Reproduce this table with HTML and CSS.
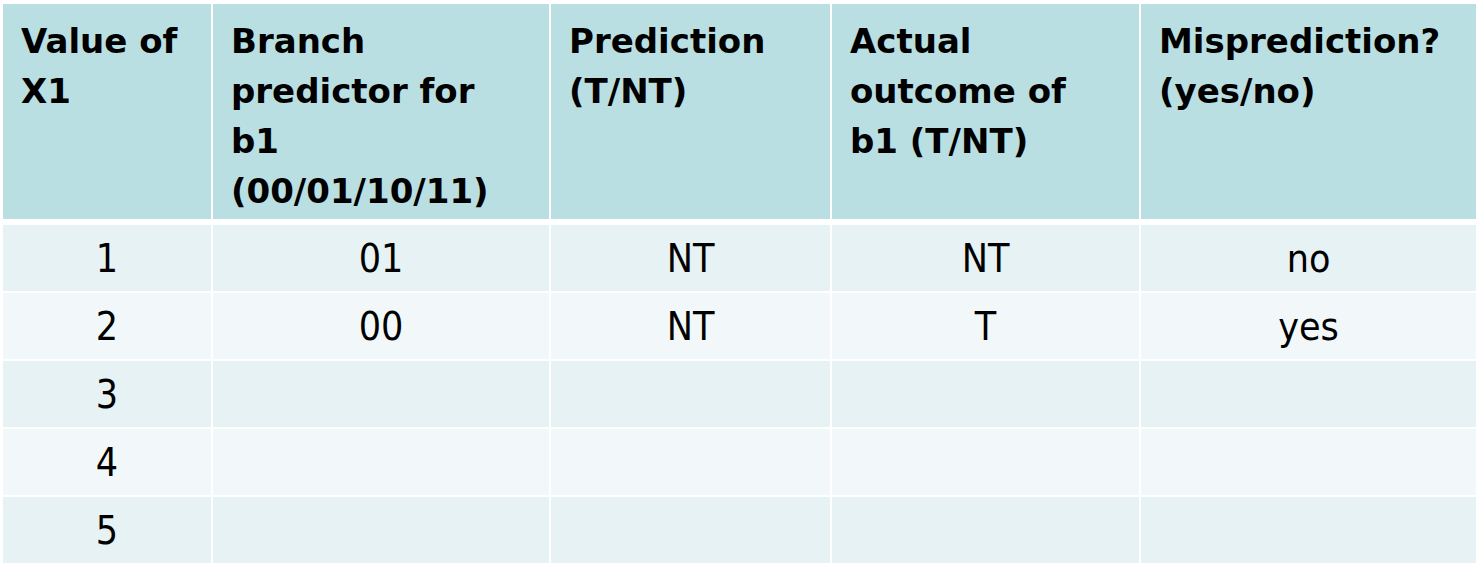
FILE: index.html
```html
<!DOCTYPE html>
<html>
<head>
<meta charset="utf-8">
<link rel="stylesheet" href="styles.css">
</head>
<body>
<div class="grid">
  <div class="cell head">Value of X1</div>
  <div class="cell head">Branch predictor for b1 (00/01/10/11)</div>
  <div class="cell head">Prediction (T/NT)</div>
  <div class="cell head">Actual outcome of b1 (T/NT)</div>
  <div class="cell head">Misprediction? (yes/no)</div>

  <div class="cell odd">1</div>
  <div class="cell odd">01</div>
  <div class="cell odd">NT</div>
  <div class="cell odd">NT</div>
  <div class="cell odd">no</div>

  <div class="cell even">2</div>
  <div class="cell even">00</div>
  <div class="cell even">NT</div>
  <div class="cell even">T</div>
  <div class="cell even">yes</div>

  <div class="cell odd">3</div>
  <div class="cell odd"></div>
  <div class="cell odd"></div>
  <div class="cell odd"></div>
  <div class="cell odd"></div>

  <div class="cell even">4</div>
  <div class="cell even"></div>
  <div class="cell even"></div>
  <div class="cell even"></div>
  <div class="cell even"></div>

  <div class="cell odd">5</div>
  <div class="cell odd"></div>
  <div class="cell odd"></div>
  <div class="cell odd"></div>
  <div class="cell odd"></div>
</div>
</body>
</html>
```
FILE: styles.css
```css
html, body {
  margin: 0;
  padding: 0;
  background: #ffffff;
}
body {
  padding: 4px 0 0 3px;
  font-family: "DejaVu Sans Condensed", "DejaVu Sans", sans-serif;
  color: #000;
}
.grid {
  display: grid;
  grid-template-columns: 208px 336px 279px 307px 335px;
  grid-template-rows: 219px repeat(5, 66px);
  column-gap: 2px;
  row-gap: 2px;
  width: 1473px;
}
.cell {
  box-sizing: border-box;
}
.head {
  background: #b9dfe3;
  margin-bottom: 4px;
  font-family: "DejaVu Sans", sans-serif;
  font-weight: bold;
  font-size: 34px;
  line-height: 50px;
  padding: 12px 24px 0 18px;
}
.odd, .even {
  display: flex;
  align-items: center;
  justify-content: center;
  font-size: 39px;
}
.odd {
  background: #e7f2f4;
}
.even {
  background: #f2f8fa;
}
```
